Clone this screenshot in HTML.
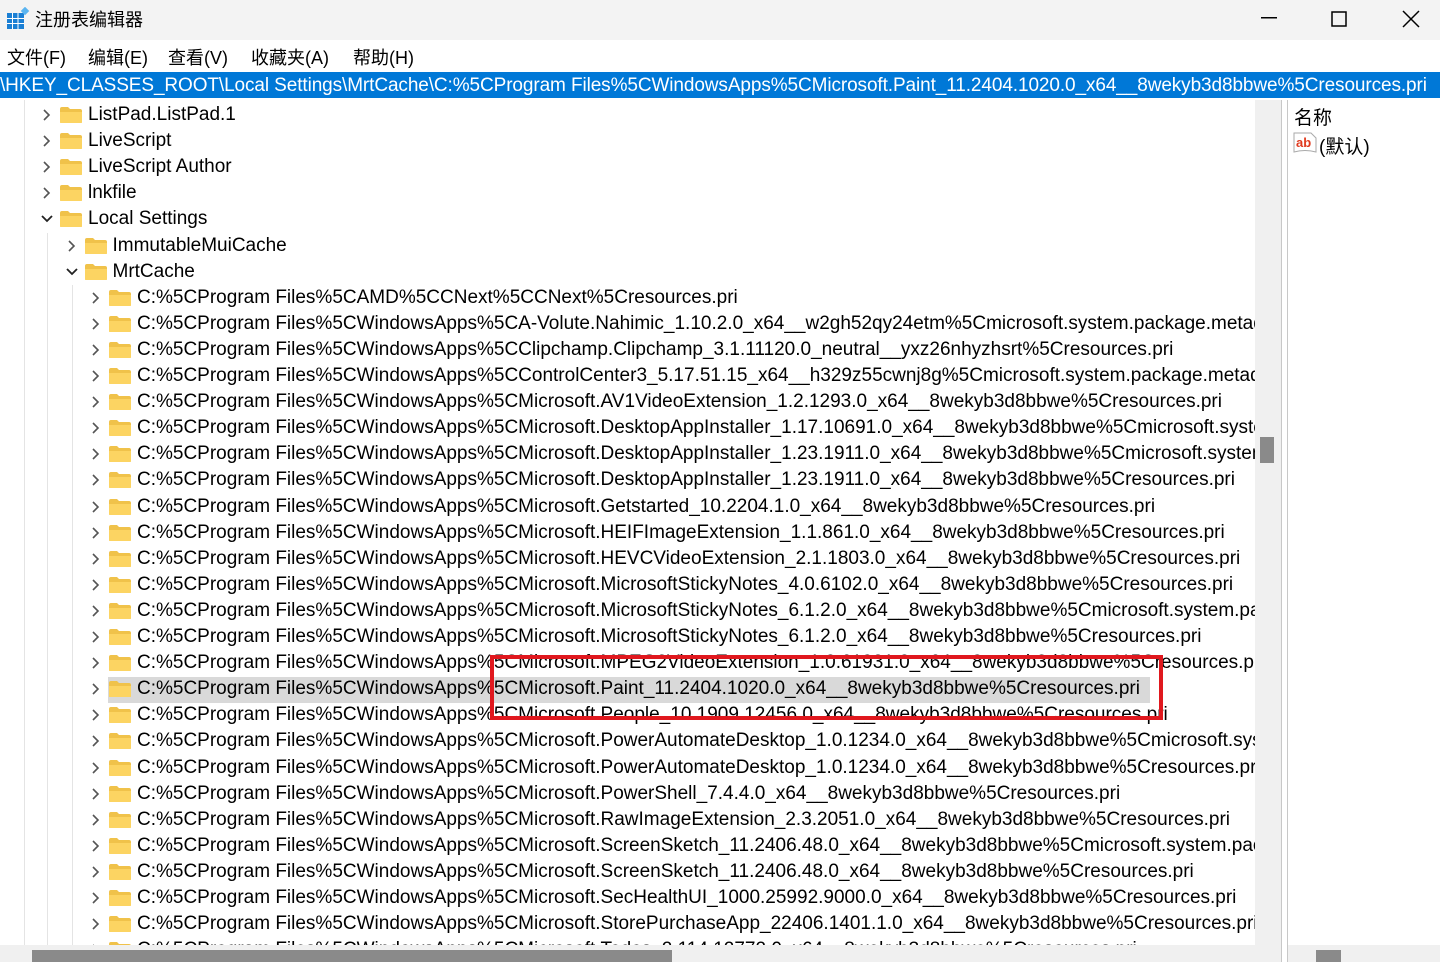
<!DOCTYPE html>
<html><head><meta charset="utf-8"><style>
*{margin:0;padding:0;box-sizing:border-box}
body{width:1440px;height:962px;overflow:hidden;background:#fff;font-family:"Segoe UI","Liberation Sans","Noto Sans CJK SC",sans-serif;color:#000;position:relative}
.title{position:absolute;left:0;top:0;width:1440px;height:40px;background:#f3f3f3}
.title .t{position:absolute;left:35px;top:6px;font-size:18px;font-family:"Liberation Sans","Noto Sans CJK SC",sans-serif}
.menu{position:absolute;left:0;top:40px;width:1440px;height:32px;background:#fff;font-family:"Liberation Sans","Noto Sans CJK SC",sans-serif;font-size:18px}
.menu span{position:absolute;top:4px}
.addr{position:absolute;left:0;top:72px;width:1440px;height:27px;background:#0078d7;color:#fff;font-size:19px;line-height:27px;white-space:nowrap;overflow:hidden;font-family:"Liberation Sans",sans-serif;border-bottom:1px solid #fff;letter-spacing:-0.1px}
.tree{position:absolute;left:0;top:100px;width:1255px;height:845px;overflow:hidden}
.row{position:absolute;height:26px;line-height:26px;font-size:19px;white-space:nowrap;font-family:"Liberation Sans",sans-serif}
.fold{position:absolute;top:5px;width:22px;height:16px}
.vl{position:absolute;width:1px;background:#e4e4e4}
.vs{position:absolute;left:1255px;top:100px;width:26px;height:845px;background:#f0f0f0}
.hs{position:absolute;left:0;top:945px;width:1281px;height:17px;background:#f0f0f0}
</style></head><body>
<div class="title">
<svg style="position:absolute;left:6px;top:7px" width="24" height="24" viewBox="0 0 24 24">
<rect x="1" y="6" width="17" height="16" fill="#1a7fd4"/>
<g stroke="#fff" stroke-width="1"><line x1="1" y1="11.5" x2="18" y2="11.5"/><line x1="1" y1="16.5" x2="18" y2="16.5"/><line x1="6.5" y1="6" x2="6.5" y2="22"/><line x1="12" y1="6" x2="12" y2="22"/></g>
<rect x="16" y="1" width="6" height="6" fill="#5ab4f0" transform="rotate(45 19 4)"/></svg>
<span class="t">注册表编辑器</span>
<svg style="position:absolute;left:1261px;top:17px" width="18" height="2"><rect width="16" height="1.5" fill="#000"/></svg>
<svg style="position:absolute;left:1331px;top:11px" width="17" height="17"><rect x="1" y="1" width="14" height="14" fill="none" stroke="#000" stroke-width="1.5"/></svg>
<svg style="position:absolute;left:1402px;top:10px" width="18" height="18"><path d="M1 1L17 17M17 1L1 17" stroke="#000" stroke-width="1.5"/></svg>
</div>
<div class="menu"><span style="left:7px">文件(F)</span><span style="left:88px">编辑(E)</span><span style="left:168px">查看(V)</span><span style="left:251px">收藏夹(A)</span><span style="left:353px">帮助(H)</span></div>
<div class="addr">\HKEY_CLASSES_ROOT\Local Settings\MrtCache\C:%5CProgram Files%5CWindowsApps%5CMicrosoft.Paint_11.2404.1020.0_x64__8wekyb3d8bbwe%5Cresources.pri</div>
<div class="tree" id="tree">
<div class="vl" style="left:24px;top:0;height:845px"></div>
<div class="vl" style="left:47px;top:133px;height:712px"></div>
<div class="vl" style="left:72px;top:185px;height:660px"></div>
<div style="position:absolute;left:108px;top:577px;width:1042px;height:26px;background:#d9d9d9"></div>
</div>
<div style="position:absolute;left:490px;top:655px;width:673px;height:65px;border:4px solid #e0181e"></div>
<div class="vs"><div style="position:absolute;left:5px;top:337px;width:14px;height:26px;background:#8a8a8a"></div></div>
<div style="position:absolute;left:1281px;top:100px;width:1px;height:862px;background:#c8c8c8"></div>
<div style="position:absolute;left:1287px;top:100px;width:1px;height:862px;background:#c8c8c8"></div>
<div class="hs"><div style="position:absolute;left:32px;top:5px;width:640px;height:12px;background:#8a8a8a"></div></div>
<div style="position:absolute;left:1288px;top:945px;width:152px;height:17px;background:#f0f0f0"><div style="position:absolute;left:28px;top:5px;width:25px;height:12px;background:#8a8a8a"></div></div>
<div style="position:absolute;left:1294px;top:103px;font-size:19px;font-family:'Liberation Sans','Noto Sans CJK SC',sans-serif">名称</div>
<svg style="position:absolute;left:1293px;top:132px" width="25" height="22" viewBox="0 0 25 22"><path d="M1 1H18L23 6V20Q12 17 1 20Z" fill="#fff" stroke="#aaa"/><text x="3" y="15" font-size="13" font-family="Liberation Sans" fill="#e03a1e" font-weight="bold">ab</text></svg>
<div style="position:absolute;left:1319px;top:132px;font-size:19px;font-family:'Liberation Sans','Noto Sans CJK SC',sans-serif">(默认)</div>
<script>
var rows=[[0,1,"ListPad.ListPad.1"],[0,1,"LiveScript"],[0,1,"LiveScript Author"],[0,1,"lnkfile"],[0,2,"Local Settings"],[1,1,"ImmutableMuiCache"],[1,2,"MrtCache"]];
var P="C:%5CProgram Files%5CWindowsApps%5C";
var L=["C:%5CProgram Files%5CAMD%5CCNext%5CCNext%5Cresources.pri",P+"A-Volute.Nahimic_1.10.2.0_x64__w2gh52qy24etm%5Cmicrosoft.system.package.metadata",P+"Clipchamp.Clipchamp_3.1.11120.0_neutral__yxz26nhyzhsrt%5Cresources.pri",P+"ControlCenter3_5.17.51.15_x64__h329z55cwnj8g%5Cmicrosoft.system.package.metadata",P+"Microsoft.AV1VideoExtension_1.2.1293.0_x64__8wekyb3d8bbwe%5Cresources.pri",P+"Microsoft.DesktopAppInstaller_1.17.10691.0_x64__8wekyb3d8bbwe%5Cmicrosoft.system",P+"Microsoft.DesktopAppInstaller_1.23.1911.0_x64__8wekyb3d8bbwe%5Cmicrosoft.system",P+"Microsoft.DesktopAppInstaller_1.23.1911.0_x64__8wekyb3d8bbwe%5Cresources.pri",P+"Microsoft.Getstarted_10.2204.1.0_x64__8wekyb3d8bbwe%5Cresources.pri",P+"Microsoft.HEIFImageExtension_1.1.861.0_x64__8wekyb3d8bbwe%5Cresources.pri",P+"Microsoft.HEVCVideoExtension_2.1.1803.0_x64__8wekyb3d8bbwe%5Cresources.pri",P+"Microsoft.MicrosoftStickyNotes_4.0.6102.0_x64__8wekyb3d8bbwe%5Cresources.pri",P+"Microsoft.MicrosoftStickyNotes_6.1.2.0_x64__8wekyb3d8bbwe%5Cmicrosoft.system.package",P+"Microsoft.MicrosoftStickyNotes_6.1.2.0_x64__8wekyb3d8bbwe%5Cresources.pri",P+"Microsoft.MPEG2VideoExtension_1.0.61931.0_x64__8wekyb3d8bbwe%5Cresources.pri",P+"Microsoft.Paint_11.2404.1020.0_x64__8wekyb3d8bbwe%5Cresources.pri",P+"Microsoft.People_10.1909.12456.0_x64__8wekyb3d8bbwe%5Cresources.pri",P+"Microsoft.PowerAutomateDesktop_1.0.1234.0_x64__8wekyb3d8bbwe%5Cmicrosoft.system",P+"Microsoft.PowerAutomateDesktop_1.0.1234.0_x64__8wekyb3d8bbwe%5Cresources.pri",P+"Microsoft.PowerShell_7.4.4.0_x64__8wekyb3d8bbwe%5Cresources.pri",P+"Microsoft.RawImageExtension_2.3.2051.0_x64__8wekyb3d8bbwe%5Cresources.pri",P+"Microsoft.ScreenSketch_11.2406.48.0_x64__8wekyb3d8bbwe%5Cmicrosoft.system.package",P+"Microsoft.ScreenSketch_11.2406.48.0_x64__8wekyb3d8bbwe%5Cresources.pri",P+"Microsoft.SecHealthUI_1000.25992.9000.0_x64__8wekyb3d8bbwe%5Cresources.pri",P+"Microsoft.StorePurchaseApp_22406.1401.1.0_x64__8wekyb3d8bbwe%5Cresources.pri",P+"Microsoft.Todos_2.114.12772.0_x64__8wekyb3d8bbwe%5Cresources.pri"];
L.forEach(function(s){rows.push([2,1,s])});
var t=document.getElementById('tree'),h='';
rows.forEach(function(r,i){
var y=Math.round(i*26.1)+2,x=r[0]*24.5;
var ch=r[1]==1?'<path d="M3 2L8 7L3 12" fill="none" stroke="#555" stroke-width="1.6"/>':'<path d="M1 4L6 9L11 4" fill="none" stroke="#222" stroke-width="1.8"/>';
h+='<div class="row" style="left:0;top:'+y+'px;width:1255px">'+
'<svg style="position:absolute;left:'+(41+x)+'px;top:6px" width="13" height="14">'+ch+'</svg>'+
'<svg class="fold" style="left:'+(60+x)+'px" viewBox="0 0 22 16"><path d="M0 2Q0 0 2 0H8L10 2H20Q22 2 22 4V15Q22 16 21 16H1Q0 16 0 15Z" fill="#f0c24a"/><path d="M0 5H22V15Q22 16 21 16H1Q0 16 0 15Z" fill="#fcd462"/></svg>'+
'<span style="position:absolute;left:'+(88+x)+'px;top:0">'+r[2]+'</span></div>';});
t.insertAdjacentHTML('beforeend',h);
</script>
</body></html>
